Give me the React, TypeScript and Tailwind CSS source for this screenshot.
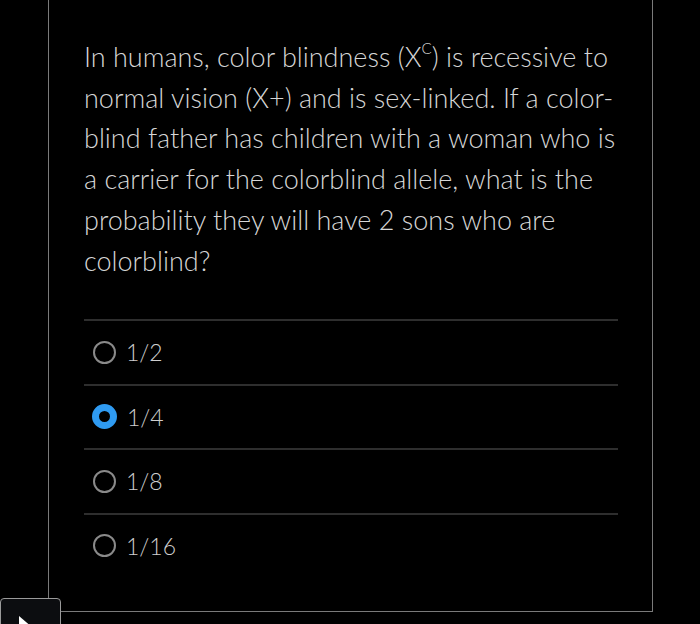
const options = [
  { label: "1/2", selected: false },
  { label: "1/4", selected: true },
  { label: "1/8", selected: false },
  { label: "1/16", selected: false },
];

function Radio({ selected }: { selected: boolean }) {
  if (selected) {
    return (
      <span className="w-[25px] h-[25px] rounded-full border-[7px] border-[#2f9bf2] bg-black shrink-0 -ml-[1px]" />
    );
  }
  return <span className="w-[23px] h-[23px] rounded-full border-2 border-[#8a8a8a] shrink-0" />;
}

export default function App() {
  return (
    <div
      className="relative w-[700px] h-[624px] bg-black overflow-hidden"
      style={{ fontFamily: "Lato, 'Open Sans', sans-serif" }}
    >
      {/* Question card */}
      <div className="ml-[48px] w-[605px] h-[612px] border border-t-0 border-[#7a7a7a] pl-[35px] pr-[34px] pt-[37px]">
        <p className="text-[27px] leading-[40.7px] font-light text-[#d6d6d6] -mr-[6px]">
          In humans, color blindness (X
          <span className="inline-block align-top text-[15px] leading-[15px] mt-[4px]">C</span>) is recessive to
          normal vision (X+) and is sex-linked. If a color-blind father has children with a woman who is
          a carrier for the colorblind allele, what is the probability they will have 2 sons who are
          colorblind?
        </p>

        {/* Answer choices */}
        <ul className="mt-[38px]">
          {options.map((o) => (
            <li
              key={o.label}
              className="h-[64.5px] border-t-2 border-[#2e2e2e] flex items-center gap-[10px] pl-[9px]"
            >
              <Radio selected={o.selected} />
              <span className="text-[23px] font-light text-[#cfcfcf]">{o.label}</span>
            </li>
          ))}
        </ul>
      </div>

      {/* Floating widget bottom left */}
      <div className="absolute left-0 top-[598px] w-[61px] h-[30px] rounded-[4px] border border-[#9a9a9a] bg-[#0c0d10] overflow-hidden">
        <svg className="absolute left-[18px] top-[17px]" width="16" height="14" viewBox="0 0 16 14">
          <path d="M0 0 L14 12 L0 14 Z" fill="#ffffff" />
        </svg>
      </div>
    </div>
  );
}
